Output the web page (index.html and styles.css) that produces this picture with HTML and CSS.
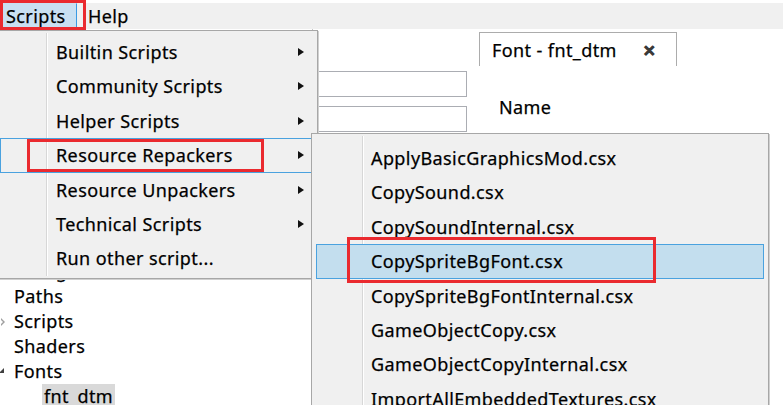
FILE: index.html
```html
<!DOCTYPE html>
<html>
<head>
<meta charset="utf-8">
<link rel="stylesheet" href="styles.css">
</head>
<body>
<div class="app">
  <div class="menubar">
    <div class="mb-item active">Scripts</div>
    <div class="mb-item">Help</div>
  </div>
  <div class="main">
    <div class="tree">
      <div class="row">General info</div>
      <div class="row">Global init</div>
      <div class="row">Game End scripts</div>
      <div class="row">Audio groups</div>
      <div class="row">Sounds</div>
      <div class="row">Sprites</div>
      <div class="row">Backgrounds &amp; Tile sets</div>
      <div class="row">Paths</div>
      <div class="row"><span class="exp hollow"></span>Scripts</div>
      <div class="row">Shaders</div>
      <div class="row"><span class="exp filled"></span>Fonts</div>
      <div class="row child"><span class="sel">fnt_dtm</span></div>
    </div>
    <div class="middle">
      <div class="field"></div>
      <div class="field"></div>
    </div>
    <div class="editor">
      <div class="tabs">
        <div class="tab">Font - fnt_dtm<span class="close">✕</span></div>
      </div>
      <div class="tab-body">
        <div class="label">Name</div>
      </div>
    </div>
  </div>

  <div class="menu main-menu">
    <div class="sep"></div>
    <div class="mi">Builtin Scripts<span class="arrow"></span></div>
    <div class="mi">Community Scripts<span class="arrow"></span></div>
    <div class="mi">Helper Scripts<span class="arrow"></span></div>
    <div class="mi open">Resource Repackers<span class="arrow"></span></div>
    <div class="mi">Resource Unpackers<span class="arrow"></span></div>
    <div class="mi">Technical Scripts<span class="arrow"></span></div>
    <div class="mi">Run other script...</div>
  </div>

  <div class="menu sub-menu">
    <div class="sep"></div>
    <div class="mi">ApplyBasicGraphicsMod.csx</div>
    <div class="mi">CopySound.csx</div>
    <div class="mi">CopySoundInternal.csx</div>
    <div class="mi hot">CopySpriteBgFont.csx</div>
    <div class="mi">CopySpriteBgFontInternal.csx</div>
    <div class="mi">GameObjectCopy.csx</div>
    <div class="mi">GameObjectCopyInternal.csx</div>
    <div class="mi">ImportAllEmbeddedTextures.csx</div>
  </div>

  <div class="mark mark-scripts"></div>
  <div class="mark mark-repack"></div>
  <div class="mark mark-copy"></div>
</div>
</body>
</html>
```
FILE: styles.css
```css
html, body {
  margin: 0;
  padding: 0;
  background: #ffffff;
}
body {
  font-family: "Noto Sans", "Open Sans", sans-serif;
  font-size: 18px;
  letter-spacing: 0.4px;
  color: #000;
  -webkit-text-stroke: 0.25px #000;
  width: 783px;
  height: 405px;
  overflow: hidden;
}
.app {
  position: relative;
  width: 783px;
  height: 405px;
  overflow: hidden;
}
.menubar {
  margin-top: 3px;
  height: 26px;
  background: #f0f0f0;
  display: flex;
  align-items: stretch;
  padding-left: 3px;
}
.mb-item {
  padding: 0 7px 0 10px;
  line-height: 25px;
  border: 1px solid transparent;
}
.mb-item.active {
  width: 74px;
  box-sizing: border-box;
  padding-left: 2px;
  background: #c9e0f2;
  border-color: #c9e0f2;
  border-right-color: #3a9ae4;
}
.main {
  display: flex;
  height: 376px;
}
.tree {
  width: 312px;
  flex: none;
  padding-top: 80px;
  border-right: 1px solid #c8c8c8;
}
.row {
  height: 25px;
  line-height: 25px;
  padding-left: 14px;
  position: relative;
  white-space: nowrap;
}
.row.child {
  padding-left: 42px;
}
.sel {
  background: #d9d9d9;
  padding: 0 2px;
  display: inline-block;
  line-height: 24px;
}
.exp {
  position: absolute;
  left: 0;
  top: 9px;
  width: 0;
  height: 0;
}
.exp.hollow {
  left: 1px;
  border-left: 4px solid #a0a0a0;
  border-top: 4px solid transparent;
  border-bottom: 4px solid transparent;
}
.exp.hollow::after {
  content: "";
  position: absolute;
  left: -4px;
  top: -2px;
  border-left: 2px solid #fff;
  border-top: 2px solid transparent;
  border-bottom: 2px solid transparent;
}
.exp.filled {
  left: -1px;
  top: 9px;
  border-right: 5px solid #404040;
  border-top: 5px solid transparent;
}
.middle {
  width: 163px;
  flex: none;
  padding-top: 42px;
  display: flex;
  flex-direction: column;
  gap: 9px;
}
.field {
  height: 24px;
  margin-right: 9px;
  border: 1px solid #abadb3;
  background: #fff;
}
.editor {
  flex: 1;
  padding: 3px 0 0 3px;
}
.tabs {
  display: flex;
}
.tab {
  width: 198px;
  height: 34px;
  box-sizing: border-box;
  border: 1px solid #acacac;
  border-bottom: none;
  padding-left: 12px;
  line-height: 32px;
  display: flex;
  align-items: center;
  background: #fff;
}
.close {
  margin-left: auto;
  margin-right: 20px;
  font-size: 15px;
  font-weight: bold;
  color: #3a3a3a;
  -webkit-text-stroke: 0.8px #3a3a3a;
}
.tab-body {
  padding: 29px 0 0 20px;
}
.label {
  line-height: 24px;
}

.menu {
  position: absolute;
  background: #f0f0f0;
  border: 1px solid #a7a7a7;
  box-shadow: 1px 1px 0 #d0d0d0;
  box-sizing: border-box;
}
.menu .sep {
  position: absolute;
  top: 2px;
  bottom: 2px;
  width: 1px;
  background: #d7d7d7;
  box-shadow: 1px 0 0 #fff;
}
.main-menu {
  left: -1px;
  top: 30px;
  width: 319px;
  height: 249px;
  padding-top: 4px;
}
.main-menu .sep {
  left: 46px;
}
.mi {
  position: relative;
  height: 34.4px;
  line-height: 32px;
  box-sizing: border-box;
  border: 1px solid transparent;
  white-space: nowrap;
}
.main-menu .mi {
  padding-left: 55px;
}
.main-menu .mi.open {
  border-color: #4aa2df;
  margin-right: 1px;
}
.arrow {
  position: absolute;
  left: 297px;
  top: 12px;
  width: 0;
  height: 0;
  border-left: 6px solid #111;
  border-top: 4.5px solid transparent;
  border-bottom: 4.5px solid transparent;
}
.sub-menu {
  left: 311px;
  top: 133px;
  width: 458px;
  height: 290px;
  padding: 7px 4px 0 4px;
}
.sub-menu .sep {
  left: 50px;
}
.sub-menu .mi {
  padding-left: 54px;
}
.sub-menu .mi.hot {
  background: #c3deee;
  border-color: #4aa2df;
}

.mark {
  position: absolute;
  border: 3px solid #ea2a2f;
  box-sizing: border-box;
}
.mark-scripts {
  left: 0;
  top: 0;
  width: 86px;
  height: 30px;
}
.mark-repack {
  left: 27px;
  top: 139px;
  width: 237px;
  height: 33px;
}
.mark-copy {
  left: 347px;
  top: 237px;
  width: 309px;
  height: 46px;
}
```
